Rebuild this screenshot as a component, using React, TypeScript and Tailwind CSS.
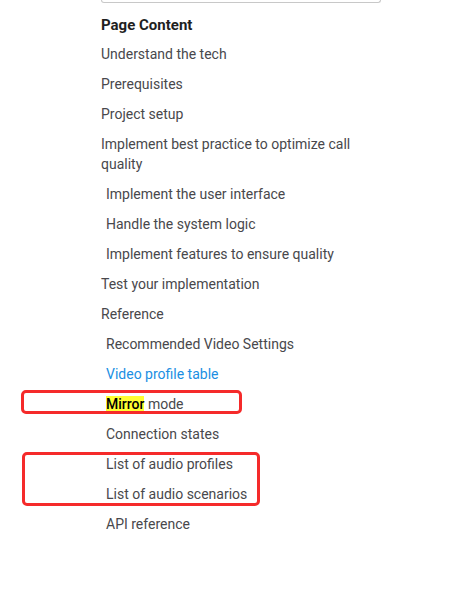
import React from "react";

const items: { t: string; indent?: boolean; blue?: boolean; mirror?: boolean }[] = [
  { t: "Understand the tech" },
  { t: "Prerequisites" },
  { t: "Project setup" },
  { t: "Implement best practice to optimize call quality" },
  { t: "Implement the user interface", indent: true },
  { t: "Handle the system logic", indent: true },
  { t: "Implement features to ensure quality", indent: true },
  { t: "Test your implementation" },
  { t: "Reference" },
  { t: "Recommended Video Settings", indent: true },
  { t: "Video profile table", indent: true, blue: true },
  { t: "Mirror mode", indent: true, mirror: true },
  { t: "Connection states", indent: true },
  { t: "List of audio profiles", indent: true },
  { t: "List of audio scenarios", indent: true },
  { t: "API reference", indent: true },
];

export default function App() {
  return (
    <div
      className="relative w-[463px] h-[591px] bg-white overflow-hidden"
      style={{ fontFamily: "Roboto, 'Liberation Sans', sans-serif" }}
    >
      <div className="ml-[101px] w-[280px] h-[3px] border-x border-b border-[#c8c8c8] rounded-b-[3px]" />
      <div className="ml-[101px] w-[258px]">
        <div className="mt-[12px] text-[15px] leading-[20px] font-bold text-[#1f1f1f]">Page Content</div>
        <ul className="mt-[4px]">
          {items.map((it) => (
            <li
              key={it.t}
              className={`py-[5px] text-[14px] leading-[20px] ${it.indent ? "pl-[5px]" : ""} ${
                it.blue ? "text-[#1a8fe3]" : "text-[#48484c]"
              }`}
            >
              {it.mirror ? (
                <>
                  <span className="inline-block leading-[17px] bg-[#ffff33] text-black font-medium">Mirror</span> mode
                </>
              ) : (
                it.t
              )}
            </li>
          ))}
        </ul>
      </div>
      <div className="absolute left-[21px] top-[390px] w-[221px] h-[24px] border-[3px] border-[#f52a2a] rounded-[5px]" />
      <div className="absolute left-[22px] top-[452px] w-[238px] h-[54px] border-[3px] border-[#f52a2a] rounded-[5px]" />
    </div>
  );
}
